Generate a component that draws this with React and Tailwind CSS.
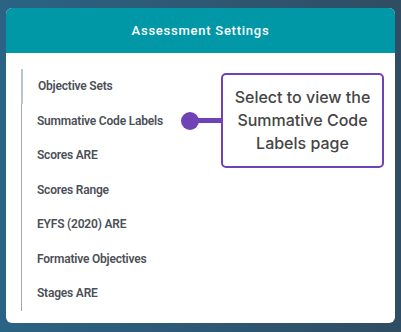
import React from "react";

// ── Menu entries ─────────────────────────────────────────────────────────────
const ITEMS = [
  "Objective Sets",
  "Summative Code Labels",
  "Scores ARE",
  "Scores Range",
  "EYFS (2020) ARE",
  "Formative Objectives",
  "Stages ARE",
];

export default function App() {
  return (
    <div
      className="w-[401px] h-[332px] bg-linear-to-r from-[#2a6384] to-[#2f4d63] pt-[8px] pl-[6px]"
      style={{ fontFamily: "Roboto, 'Liberation Sans', sans-serif" }}
    >
      {/* ── Card ─────────────────────────────────────────────────────────── */}
      <div className="relative w-[389px] h-[315px] bg-white rounded-[6px] overflow-hidden">
        {/* Header */}
        <div className="h-[45px] bg-[#0097a7] flex items-center justify-center">
          <span className="text-white text-[13px] font-medium tracking-[0.75px]">
            Assessment Settings
          </span>
        </div>

        {/* Nav list */}
        <div className="pt-[16px] pl-[15px]">
          <ul className="border-l border-[#a3a8ad]">
            {ITEMS.map((label, idx) => (
              <li
                key={label}
                className={`h-[34.5px] flex items-center text-[12px] font-semibold tracking-[-0.2px] text-[#4b5057] ${
                  idx === 0
                    ? "-ml-px border-l-[2px] border-[#b6c4cc] pl-[15px]"
                    : "pl-[15px]"
                }`}
              >
                {label}
              </li>
            ))}
          </ul>
        </div>

        {/* ── Callout overlay ─────────────────────────────────────────────── */}
        <div className="absolute left-[175px] top-[65px] flex items-center">
          <div className="w-[18px] h-[18px] rounded-full bg-[#6f42b8]" />
          <div className="-ml-px w-[23px] h-[5px] bg-[#6f42b8]" />
          <div
            className="w-[163px] h-[95px] border-2 border-[#6f42b8] rounded-[5px] bg-white flex items-center justify-center text-center text-[16px] leading-[23px] font-medium text-[#454545]"
            style={{ fontFamily: "Inter, 'Liberation Sans', sans-serif" }}
          >
            Select to view the
            <br />
            Summative Code
            <br />
            Labels page
          </div>
        </div>
      </div>
    </div>
  );
}
